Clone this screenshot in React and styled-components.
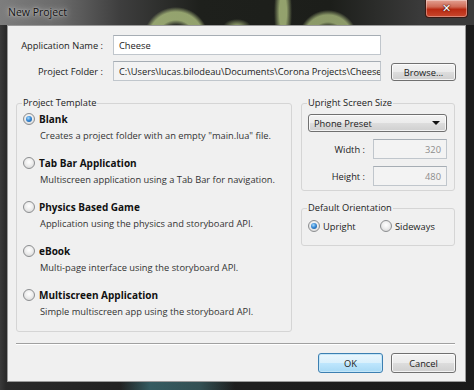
import React from "react";
import styled, { createGlobalStyle, css } from "styled-components";

const Global = createGlobalStyle`
  html, body { margin: 0; padding: 0; background: #1c1c1c; }
  body { width: 474px; height: 390px; overflow: hidden; }
  * { box-sizing: border-box; }
`;

const FONT = `"Open Sans", "Noto Sans", "Liberation Sans", sans-serif`;
const G = "rgba(160,176,118,";

const Window = styled.div`
  width: 474px;
  height: 390px;
  display: flex;
  flex-direction: column;
  padding: 0 8px 8px 7px;
  font-family: ${FONT};
  font-size: 9.3px;
  color: #1b1b1b;
  background:
    linear-gradient(90deg, transparent 0, transparent 120px, rgba(70,140,150,0.55) 150px, rgba(90,170,180,0.35) 200px, transparent 235px) bottom / 100% 8px no-repeat,
    linear-gradient(90deg, #3a3a3a 0, #2a2a2a 6px, #202020 30%, #1a1a1a 100%);
`;

const TitleBar = styled.div`
  height: 25px;
  margin: 0 -8px 0 -7px;
  padding: 0 6px 0 8px;
  display: flex;
  align-items: flex-start;
  justify-content: space-between;
  background:
    radial-gradient(circle at 276px 40px, ${G}0) 15px, ${G}0.9) 20px, ${G}0.9) 28px, ${G}0) 33px),
    radial-gradient(ellipse 9px 40px at 383px 12px, ${G}0.9) 40%, ${G}0) 100%),
    radial-gradient(circle at 428px 40px, ${G}0) 13px, ${G}0.85) 18px, ${G}0.85) 25px, ${G}0) 30px),
    radial-gradient(ellipse 14px 8px at 337px 27px, ${G}0.8) 30%, ${G}0) 100%),
    linear-gradient(90deg, #7d7d7d 0, #6a6a6a 60px, #3e3e3e 120px, #1e201c 200px, #1c1e1a 330px, #3a3a3a 420px, #3a3a3a 100%);
  background-size: 100% 100%;
  background-position: -100px 0, -100px 0, -100px 0, -100px 0, 0 0;
  background-repeat: no-repeat;
`;

const Title = styled.span`
  margin-top: 5px;
  font-size: 10.5px;
  line-height: 15px;
  color: #111;
  text-shadow: 0 0 6px rgba(255,255,255,0.75), 0 0 2px rgba(255,255,255,0.6);
`;

const CloseButton = styled.div`
  width: 43px;
  height: 18px;
  border: 1px solid #3a1a14;
  border-top: none;
  border-radius: 0 0 4px 4px;
  background: linear-gradient(180deg, #e3a192 0%, #cf6a55 40%, #b92a12 55%, #c9482e 100%);
  box-shadow: inset 0 0 0 1px rgba(255,255,255,0.35);
  display: flex;
  align-items: center;
  justify-content: center;
  color: #fff;
  font-family: "DejaVu Sans", sans-serif;
  font-weight: bold;
  font-size: 11px;
  text-shadow: 0 0 2px #3a0d05, 0 0 1px #3a0d05;
`;

const Client = styled.div`
  flex: 1;
  display: flex;
  flex-direction: column;
  background: #f0f0f0;
  border: 1px solid #9a9a9a;
  padding: 9px 9px 8px 8px;
`;

const FormGrid = styled.div`
  display: grid;
  grid-template-columns: 87px 268px 65px;
  grid-template-rows: 20px 20px;
  column-gap: 10px;
  row-gap: 6px;
  align-items: center;
`;

const FieldLabel = styled.label`
  text-align: right;
  white-space: nowrap;
`;

const TextBox = styled.div`
  height: ${p => p.$h || 20}px;
  border: 1px solid #c0c6cc;
  border-top-color: #a6adb4;
  background: ${p => (p.$readOnly ? "#f3f3f3" : "#fff")};
  padding: 0 5px;
  display: flex;
  align-items: center;
  justify-content: ${p => (p.$right ? "flex-end" : "flex-start")};
  color: ${p => (p.$disabled ? "#8d8d8d" : "#1b1b1b")};
  overflow: hidden;
  white-space: nowrap;
`;

const buttonBase = css`
  height: ${p => p.$h || 20}px;
  border: 1px solid #707070;
  border-radius: 3px;
  background: linear-gradient(180deg, #f3f3f3 0%, #ebebeb 49%, #dddddd 51%, #cfcfcf 100%);
  box-shadow: inset 0 0 0 1px rgba(255,255,255,0.75);
  display: flex;
  align-items: center;
  justify-content: center;
  font-family: ${FONT};
  font-size: 9.3px;
  color: #1b1b1b;
  padding: 0;
`;

const PushButton = styled.button`
  ${buttonBase};
  width: 65px;
  align-self: end;
  ${p => p.$default && css`
    border-color: #3c7fb1;
    background: linear-gradient(180deg, #eaf6fd 0%, #d9f0fc 49%, #bee6fd 51%, #a7d9f5 100%);
    box-shadow: inset 0 0 0 1px #c4e6f8;
  `}
`;

const GroupsRow = styled.div`
  margin-top: 15px;
  display: flex;
  gap: 9px;
  padding-right: 1px;
`;

const Group = styled.fieldset`
  margin: 0;
  min-inline-size: 0;
  border: 1px solid #d5d5d5;
  border-radius: 3px;
  padding: ${p => p.$pad};
  width: ${p => p.$w}px;
  height: ${p => p.$h}px;
`;

const Legend = styled.legend`
  padding: 0 1px;
  margin-left: -1px;
  line-height: 14px;
  color: #1b1b1b;
`;

const TemplateList = styled.div`
  display: flex;
  flex-direction: column;
  gap: 10px;
`;

const TemplateItem = styled.div`
  display: grid;
  grid-template-columns: 16px 1fr;
  grid-template-rows: 17px 17px;
  align-items: center;
`;

const RadioCircle = styled.span`
  width: 12px;
  height: 12px;
  border-radius: 50%;
  border: 1px solid #8c8e90;
  background: radial-gradient(circle at 50% 40%, #ffffff 0%, #eeeeee 45%, #cfcfcf 100%);
  display: flex;
  align-items: center;
  justify-content: center;
  flex: none;
  &::after {
    content: "";
    display: ${p => (p.$checked ? "block" : "none")};
    width: 6px;
    height: 6px;
    border-radius: 50%;
    background: radial-gradient(circle at 40% 35%, #a9dcfb 0%, #3a8ad6 45%, #10508f 100%);
  }
`;

const ItemTitle = styled.span`
  font-weight: bold;
  font-size: 10px;
  color: #111;
  white-space: nowrap;
`;

const ItemDesc = styled.span`
  grid-column: 2;
  padding-left: 1px;
  color: #333;
  white-space: nowrap;
`;

const RightColumn = styled.div`
  display: flex;
  flex-direction: column;
  gap: 10px;
`;

const SizeGrid = styled.div`
  display: grid;
  grid-template-columns: 57px 74px;
  grid-template-rows: 18px 20px 20px;
  column-gap: 8px;
  row-gap: 7px;
  align-items: center;
`;

const Select = styled.div`
  ${buttonBase};
  grid-column: 1 / span 2;
  height: 18px;
  justify-content: space-between;
  padding: 0 6px 0 5px;
`;

const Arrow = styled.span`
  width: 0;
  height: 0;
  border-left: 4px solid transparent;
  border-right: 4px solid transparent;
  border-top: 4px solid #111;
`;

const OptionRow = styled.div`
  display: grid;
  grid-template-columns: 72px auto;
  height: 16px;
  align-items: center;
`;

const Option = styled.label`
  display: flex;
  align-items: center;
  gap: 3px;
`;

const Separator = styled.div`
  margin-top: 11px;
  height: 2px;
  margin-right: 1px;
  border-top: 1px solid #a0a0a0;
  border-bottom: 1px solid #ffffff;
`;

const ButtonRow = styled.div`
  margin-top: 8px;
  display: flex;
  justify-content: flex-end;
  gap: 8px;
`;

const templates = [
  { title: "Blank", desc: 'Creates a project folder with an empty "main.lua" file.', checked: true },
  { title: "Tab Bar Application", desc: "Multiscreen application using a Tab Bar for navigation." },
  { title: "Physics Based Game", desc: "Application using the physics and storyboard API." },
  { title: "eBook", desc: "Multi-page interface using the storyboard API." },
  { title: "Multiscreen Application", desc: "Simple multiscreen app using the storyboard API." },
];

export default function App() {
  return (
    <>
      <Global />
      <Window>
        <TitleBar>
          <Title>New Project</Title>
          <CloseButton>✕</CloseButton>
        </TitleBar>
        <Client>
          <FormGrid>
            <FieldLabel>Application Name :</FieldLabel>
            <TextBox>Cheese</TextBox>
            <span />
            <FieldLabel>Project Folder :</FieldLabel>
            <TextBox $readOnly>C:\Users\lucas.bilodeau\Documents\Corona Projects\Cheese</TextBox>
            <PushButton $h={18}>Browse...</PushButton>
          </FormGrid>

          <GroupsRow>
            <Group $w={276} $h={236} $pad="0 6px 8px 6px">
              <Legend>Project Template</Legend>
              <TemplateList>
                {templates.map(t => (
                  <TemplateItem key={t.title}>
                    <RadioCircle $checked={t.checked} />
                    <ItemTitle>{t.title}</ItemTitle>
                    <ItemDesc>{t.desc}</ItemDesc>
                  </TemplateItem>
                ))}
              </TemplateList>
            </Group>

            <RightColumn>
              <Group $w={154} $h={95} $pad="4px 7px 2px 6px">
                <Legend>Upright Screen Size</Legend>
                <SizeGrid>
                  <Select>
                    <span>Phone Preset</span>
                    <Arrow />
                  </Select>
                  <FieldLabel>Width :</FieldLabel>
                  <TextBox $readOnly $disabled $right>320</TextBox>
                  <FieldLabel>Height :</FieldLabel>
                  <TextBox $readOnly $disabled $right>480</TextBox>
                </SizeGrid>
              </Group>
              <Group $w={154} $h={45} $pad="3px 6px 8px 6px">
                <Legend>Default Orientation</Legend>
                <OptionRow>
                  <Option><RadioCircle $checked />Upright</Option>
                  <Option><RadioCircle />Sideways</Option>
                </OptionRow>
              </Group>
            </RightColumn>
          </GroupsRow>

          <Separator />
          <ButtonRow>
            <PushButton $default>OK</PushButton>
            <PushButton>Cancel</PushButton>
          </ButtonRow>
        </Client>
      </Window>
    </>
  );
}
